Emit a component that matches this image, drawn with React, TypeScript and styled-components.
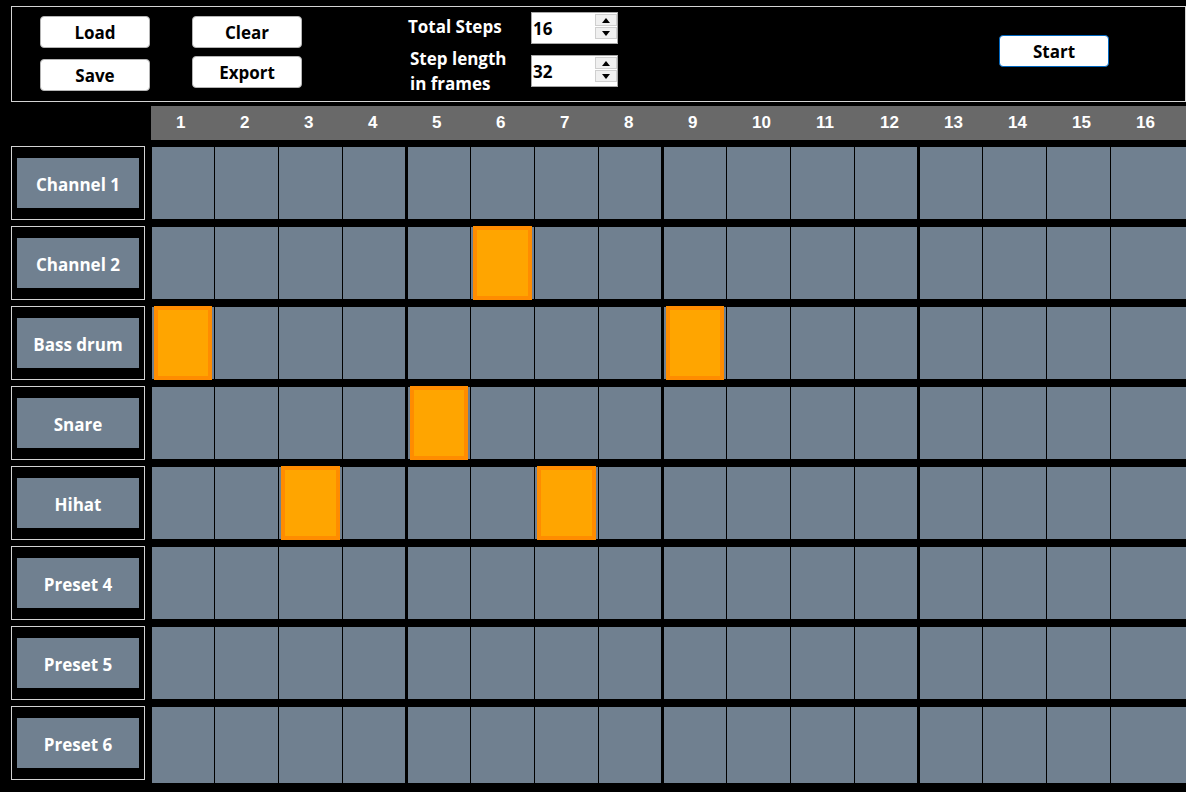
import React from "react";
import styled, { createGlobalStyle, css } from "styled-components";

const GlobalStyle = createGlobalStyle`
  html, body {
    margin: 0;
    padding: 0;
    background: #000;
    overflow: hidden;
  }
  body {
    font-family: "Open Sans", "Noto Sans", sans-serif;
  }
  * { box-sizing: border-box; }
`;

const Page = styled.div`
  width: 1186px;
  height: 792px;
  overflow: hidden;
  display: flex;
  flex-direction: column;
  background: #000;
`;

const TopPanel = styled.div`
  margin: 6px 0 0 11px;
  width: 1175px;
  height: 96px;
  border: 1px solid #d3d3d3;
  display: flex;
  align-items: flex-start;
  flex: none;
`;

const ButtonColumn = styled.div<{ $left: number; $gap: number }>`
  display: flex;
  flex-direction: column;
  gap: ${(p) => p.$gap}px;
  margin-left: ${(p) => p.$left}px;
  margin-top: 9px;
`;

const Button = styled.button<{ $focused?: boolean; $left?: number; $top?: number }>`
  width: 110px;
  height: 32px;
  padding: 2px 0 0 0;
  background: #fff;
  border: 1px solid #b4b4b4;
  border-radius: 4px;
  font-family: "Open Sans", "Noto Sans", sans-serif;
  font-weight: 700;
  font-size: 17px;
  line-height: 26px;
  color: #000;
  flex: none;
  ${(p) =>
    p.$focused &&
    css`
      border-color: #0067c0;
    `}
  ${(p) =>
    p.$left !== undefined &&
    css`
      margin-left: ${p.$left}px;
    `}
  ${(p) =>
    p.$top !== undefined &&
    css`
      margin-top: ${p.$top}px;
    `}
`;

const StepsGrid = styled.div`
  margin-left: 106px;
  margin-top: 5px;
  display: grid;
  grid-template-columns: 123px 87px;
  row-gap: 11px;
  flex: none;
`;

const FieldLabel = styled.div<{ $offset: number; $indent?: number }>`
  color: #fff;
  font-weight: 700;
  font-size: 17px;
  line-height: 25px;
  align-self: start;
  margin-top: ${(p) => p.$offset}px;
  padding-left: ${(p) => p.$indent ?? 0}px;
  white-space: nowrap;
`;

const NumberBox = styled.div`
  width: 87px;
  height: 32px;
  background: #fff;
  border: 1px solid #a8a8a8;
  display: flex;
  align-items: center;
`;

const NumberValue = styled.input`
  flex: 1;
  min-width: 0;
  border: none;
  outline: none;
  background: transparent;
  padding: 0 0 0 1px;
  font-family: "Open Sans", "Noto Sans", sans-serif;
  font-weight: 700;
  font-size: 17px;
  color: #000;
`;

const Spinner = styled.div`
  align-self: flex-start;
  margin-top: 1px;
  width: 22px;
  display: flex;
  flex-direction: column;
  gap: 1px;
`;

const SpinButton = styled.div`
  height: 12px;
  background: #f0f0f0;
  border: 1px solid #cfcfcf;
  display: flex;
  align-items: center;
  justify-content: center;
`;

const Arrow = styled.span<{ $dir: "up" | "down" }>`
  width: 0;
  height: 0;
  border-left: 4px solid transparent;
  border-right: 4px solid transparent;
  ${(p) =>
    p.$dir === "up"
      ? css`
          border-bottom: 5px solid #000;
        `
      : css`
          border-top: 5px solid #000;
        `}
`;

const Main = styled.div`
  margin-left: 11px;
  display: flex;
  flex-direction: column;
  flex: 1;
`;

const HeaderRow = styled.div`
  margin-top: 4px;
  margin-left: 140px;
  height: 34px;
  background: #696969;
  display: flex;
  padding-left: 1px;
  flex: none;
`;

const HeaderCell = styled.div`
  width: 64px;
  flex: none;
  padding-left: 24px;
  color: #fff;
  font-family: "Liberation Sans", Arial, sans-serif;
  font-weight: 700;
  font-size: 17px;
  line-height: 34px;
`;

const Rows = styled.div`
  margin-top: 6px;
  display: flex;
  flex-direction: column;
  gap: 6px;
`;

const Row = styled.div`
  display: flex;
  align-items: flex-start;
`;

const LabelBox = styled.div`
  width: 134px;
  height: 74px;
  flex: none;
  border: 1px solid #d3d3d3;
  display: flex;
  align-items: center;
  justify-content: center;
`;

const LabelInner = styled.div`
  width: 122px;
  height: 50px;
  padding-top: 2px;
  background: #708090;
  color: #fff;
  font-weight: 700;
  font-size: 17px;
  display: flex;
  align-items: center;
  justify-content: center;
  white-space: nowrap;
`;

const Cells = styled.div<{ $height: number }>`
  margin-left: 7px;
  margin-top: 1px;
  height: ${(p) => p.$height}px;
  flex: 1;
  display: flex;
  gap: 3px;
`;

const Group = styled.div<{ $fill?: boolean }>`
  display: flex;
  gap: 1px;
  ${(p) =>
    p.$fill
      ? css`
          flex: 1;
        `
      : css`
          width: 253px;
          flex: none;
        `}
`;

const Cell = styled.div<{ $w: number | "fill" }>`
  position: relative;
  background: #708090;
  ${(p) =>
    p.$w === "fill"
      ? css`
          flex: 1;
        `
      : css`
          width: ${p.$w}px;
          flex: none;
        `}
`;

const ActiveMark = styled.div`
  position: absolute;
  top: -1px;
  bottom: -1px;
  left: 2px;
  right: 2px;
  background: #ffa500;
  border: 4px solid #ff8c00;
`;

const channels = [
  "Channel 1",
  "Channel 2",
  "Bass drum",
  "Snare",
  "Hihat",
  "Preset 4",
  "Preset 5",
  "Preset 6",
];

const active: Record<number, number[]> = {
  1: [6],
  2: [1, 9],
  3: [5],
  4: [3, 7],
};

const widths: (number | "fill")[][] = [
  [62, 63, 63, 62],
  [62, 63, 63, 62],
  [62, 63, 63, 62],
  [62, 63, 63, "fill"],
];

export default function App() {
  const steps = Array.from({ length: 16 }, (_, i) => i + 1);
  return (
    <>
      <GlobalStyle />
      <Page>
        <TopPanel>
          <ButtonColumn $left={28} $gap={11}>
            <Button>Load</Button>
            <Button>Save</Button>
          </ButtonColumn>
          <ButtonColumn $left={42} $gap={8}>
            <Button>Clear</Button>
            <Button>Export</Button>
          </ButtonColumn>
          <StepsGrid>
            <FieldLabel $offset={2}>Total Steps</FieldLabel>
            <NumberBox>
              <NumberValue defaultValue="16" />
              <Spinner>
                <SpinButton>
                  <Arrow $dir="up" />
                </SpinButton>
                <SpinButton>
                  <Arrow $dir="down" />
                </SpinButton>
              </Spinner>
            </NumberBox>
            <FieldLabel $offset={-9} $indent={2}>
              Step length
              <br />
              in frames
            </FieldLabel>
            <NumberBox>
              <NumberValue defaultValue="32" />
              <Spinner>
                <SpinButton>
                  <Arrow $dir="up" />
                </SpinButton>
                <SpinButton>
                  <Arrow $dir="down" />
                </SpinButton>
              </Spinner>
            </NumberBox>
          </StepsGrid>
          <Button $focused $left={381} $top={28}>
            Start
          </Button>
        </TopPanel>
        <Main>
          <HeaderRow>
            {steps.map((s) => (
              <HeaderCell key={s}>{s}</HeaderCell>
            ))}
          </HeaderRow>
          <Rows>
            {channels.map((name, r) => (
              <Row key={name}>
                <LabelBox>
                  <LabelInner>{name}</LabelInner>
                </LabelBox>
                <Cells $height={r === channels.length - 1 ? 76 : 72}>
                  {widths.map((g, gi) => (
                    <Group key={gi} $fill={gi === 3}>
                      {g.map((w, ci) => {
                        const step = gi * 4 + ci + 1;
                        const on = (active[r] || []).includes(step);
                        return (
                          <Cell key={ci} $w={w}>
                            {on && <ActiveMark />}
                          </Cell>
                        );
                      })}
                    </Group>
                  ))}
                </Cells>
              </Row>
            ))}
          </Rows>
        </Main>
      </Page>
    </>
  );
}
